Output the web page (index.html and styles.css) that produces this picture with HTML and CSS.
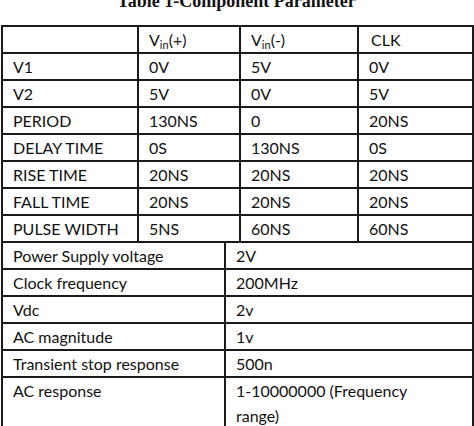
FILE: index.html
```html
<!DOCTYPE html>
<html>
<head>
<meta charset="utf-8">
<link rel="stylesheet" href="styles.css">
</head>
<body>
<div class="page">
  <div class="title-box"><div class="title">Table 1-Component Parameter</div></div>
  <table class="params upper">
    <colgroup><col class="c1"><col class="c2"><col class="c3"><col class="c4"></colgroup>
    <tr class="head"><td></td><td>V<sub>in</sub>(+)</td><td>V<sub>in</sub>(-)</td><td class="clk">CLK</td></tr>
    <tr><td>V1</td><td>0V</td><td>5V</td><td>0V</td></tr>
    <tr><td>V2</td><td>5V</td><td>0V</td><td>5V</td></tr>
    <tr><td>PERIOD</td><td>130NS</td><td>0</td><td>20NS</td></tr>
    <tr><td>DELAY TIME</td><td>0S</td><td>130NS</td><td>0S</td></tr>
    <tr><td>RISE TIME</td><td>20NS</td><td>20NS</td><td>20NS</td></tr>
    <tr><td>FALL TIME</td><td>20NS</td><td>20NS</td><td>20NS</td></tr>
    <tr><td>PULSE WIDTH</td><td>5NS</td><td>60NS</td><td>60NS</td></tr>
  </table>
  <table class="params lower">
    <colgroup><col class="d1"><col class="d2"></colgroup>
    <tr><td>Power Supply voltage</td><td>2V</td></tr>
    <tr><td>Clock frequency</td><td>200MHz</td></tr>
    <tr><td>Vdc</td><td>2v</td></tr>
    <tr><td>AC magnitude</td><td>1v</td></tr>
    <tr><td>Transient stop response</td><td>500n</td></tr>
    <tr class="tall"><td>AC response</td><td>1-10000000 (Frequency<br>range)</td></tr>
  </table>
</div>
</body>
</html>
```
FILE: styles.css
```css
html, body {
  margin: 0;
  padding: 0;
  background: #ffffff;
}
body {
  overflow: hidden;
}
.page {
  width: 474px;
  height: 426px;
  overflow: hidden;
  padding-left: 1px;
  box-sizing: border-box;
}
.title-box {
  display: flow-root;
  height: 25px;
  text-align: center;
  width: 471px;
}
.title {
  font: bold 18px/18px "Liberation Serif", serif;
  color: #111;
  margin-top: -8px;
}
.params {
  border-collapse: collapse;
  table-layout: fixed;
  width: 471px;
  font-family: Lato, "Open Sans", sans-serif;
  font-size: 16px;
  color: #111;
}
.params td {
  border: 2px solid #1a1a1a;
  padding: 0 0 0 10px;
  height: 25px;
  vertical-align: middle;
  white-space: nowrap;
  line-height: 18px;
}
.upper .clk {
  padding-left: 12px;
}
.c1 { width: 136px; }
.c2 { width: 102px; }
.c3 { width: 118px; }
.c4 { width: 115px; }
.d1 { width: 223px; }
.d2 { width: 248px; }
.lower tr:first-child td {
  border-top: none;
}
.lower .tall td {
  vertical-align: top;
  height: 56px;
  line-height: 25px;
  padding-top: 0;
}
sub {
  font-size: 11px;
  vertical-align: -3px;
  line-height: 0;
}
```
